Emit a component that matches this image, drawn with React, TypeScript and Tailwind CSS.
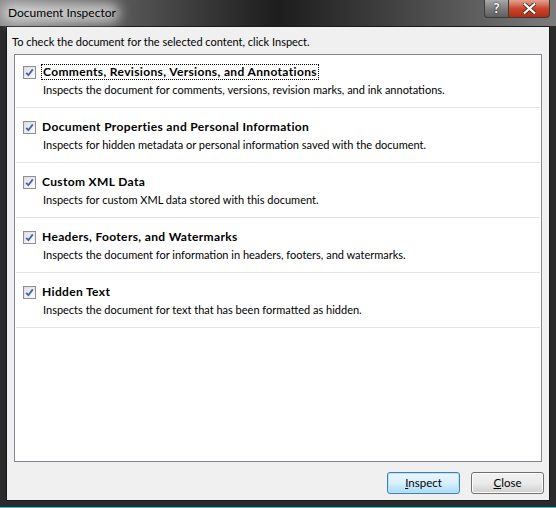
import React from 'react';

const items = [
  {
    title: 'Comments, Revisions, Versions, and Annotations',
    desc: 'Inspects the document for comments, versions, revision marks, and ink annotations.',
  },
  {
    title: 'Document Properties and Personal Information',
    desc: 'Inspects for hidden metadata or personal information saved with the document.',
  },
  {
    title: 'Custom XML Data',
    desc: 'Inspects for custom XML data stored with this document.',
  },
  {
    title: 'Headers, Footers, and Watermarks',
    desc: 'Inspects the document for information in headers, footers, and watermarks.',
  },
  {
    title: 'Hidden Text',
    desc: 'Inspects the document for text that has been formatted as hidden.',
  },
];

function CheckBox() {
  return (
    <div className="w-[13px] h-[13px] shrink-0 border border-[#8f8f8f] bg-gradient-to-br from-[#dcdcdc] to-[#f8f8f8] p-[1px]">
      <div className="w-full h-full bg-gradient-to-br from-[#e2e2e2] to-[#fbfbfb]">
        <svg viewBox="0 0 9 9" className="block w-[9px] h-[9px]">
          <path d="M1.2 4.8 L3.4 7.2 L7.8 1.4" fill="none" stroke="#4760ad" strokeWidth="1.8" />
        </svg>
      </div>
    </div>
  );
}

function Button({ label, accel, focused }: { label: string; accel: string; focused?: boolean }) {
  return (
    <div
      className={
        focused
          ? 'w-[73px] h-[22px] rounded-[3px] border border-[#3c7fb1] bg-gradient-to-b from-[#eaf6fd] via-[#d9f0fc] to-[#a7d9f5] shadow-[inset_0_0_0_1px_#b8e4fb] flex items-center justify-center text-[11.5px] text-black'
          : 'w-[73px] h-[22px] rounded-[3px] border border-[#707070] bg-gradient-to-b from-[#f2f2f2] via-[#ebebeb] to-[#cfcfcf] shadow-[inset_0_0_0_1px_#fcfcfc] flex items-center justify-center text-[11.5px] text-black'
      }
    >
      <span>
        <span className="underline">{accel}</span>
        {label.slice(1)}
      </span>
    </div>
  );
}

export default function App() {
  return (
    <div
      className="w-[556px] h-[508px] flex flex-col bg-[#2b2b2b] text-black overflow-hidden"
      style={{ fontFamily: 'Lato, "Noto Sans", sans-serif' }}
    >
      {/* title bar */}
      <div className="h-[26px] shrink-0 flex items-start justify-between bg-gradient-to-r from-[#8d8d8d] via-[#1d1d1d] to-[#7c7c7c]">
        <div className="relative pl-[8px] pt-[5px]">
          <div className="absolute left-[2px] top-[3px] w-[118px] h-[20px] rounded-full bg-white/60 blur-[6px]" />
          <span className="relative block text-[12px] leading-[16px] text-black">Document Inspector</span>
        </div>
        <div className="flex mr-[6px]">
          <div className="w-[25px] h-[18px] rounded-bl-[4px] border border-t-0 border-[#3a3a3a] bg-gradient-to-b from-[#a9a9a9] via-[#7e7e7e] to-[#5f5f5f] flex items-center justify-center text-white text-[13px] font-bold leading-none [text-shadow:0_0_2px_#000]">
            ?
          </div>
          <div className="w-[41px] h-[18px] rounded-br-[4px] border border-t-0 border-l-0 border-[#3a3a3a] bg-gradient-to-b from-[#e0a393] via-[#c9452c] to-[#b12d14] flex items-center justify-center">
            <svg viewBox="0 0 12 10" className="w-[13px] h-[11px]">
              <path d="M1.5 1 L10.5 9 M10.5 1 L1.5 9" stroke="#3a1a10" strokeWidth="3.4" strokeLinecap="square" />
              <path d="M1.5 1 L10.5 9 M10.5 1 L1.5 9" stroke="#ffffff" strokeWidth="2" strokeLinecap="square" />
            </svg>
          </div>
        </div>
      </div>

      {/* client */}
      <div className="mx-[6px] h-[475px] border border-[#1a1a1a] bg-[#f0f0f0] flex flex-col">
        <div className="pl-[5px] pt-[7px] h-[27px] text-[11px] leading-[16px]">
          To check the document for the selected content, click Inspect.
        </div>
        <div className="mx-[7px] h-[408px] border border-[#828790] bg-white flex flex-col">
          {items.map((it, i) => (
            <div
              key={i}
              className={
                i === 0
                  ? 'mx-[1px] h-[53px] border-b border-[#e3e3e3] flex flex-col pt-[9px]'
                  : 'mx-[1px] h-[55px] border-b border-[#e3e3e3] flex flex-col pt-[11px]'
              }
            >
              <div className="flex items-center pl-[7px] h-[16px]">
                <CheckBox />
                <div
                  className={
                    i === 0
                      ? 'ml-[5px] px-[1px] border border-dotted border-black text-[12px] tracking-[0.35px] leading-[14px] font-bold'
                      : 'ml-[6px] text-[12px] tracking-[0.35px] leading-[16px] font-bold'
                  }
                >
                  {it.title}
                </div>
              </div>
              <div className="pl-[27px] mt-[2px] text-[11px] leading-[16px]">{it.desc}</div>
            </div>
          ))}
        </div>
        <div className="flex justify-end gap-[11px] pr-[5px] pt-[10px]">
          <Button label="Inspect" accel="I" focused />
          <Button label="Close" accel="C" />
        </div>
      </div>

      {/* bottom frame */}
      <div className="flex-1 border-b border-[#3bc3e0]" />
    </div>
  );
}
